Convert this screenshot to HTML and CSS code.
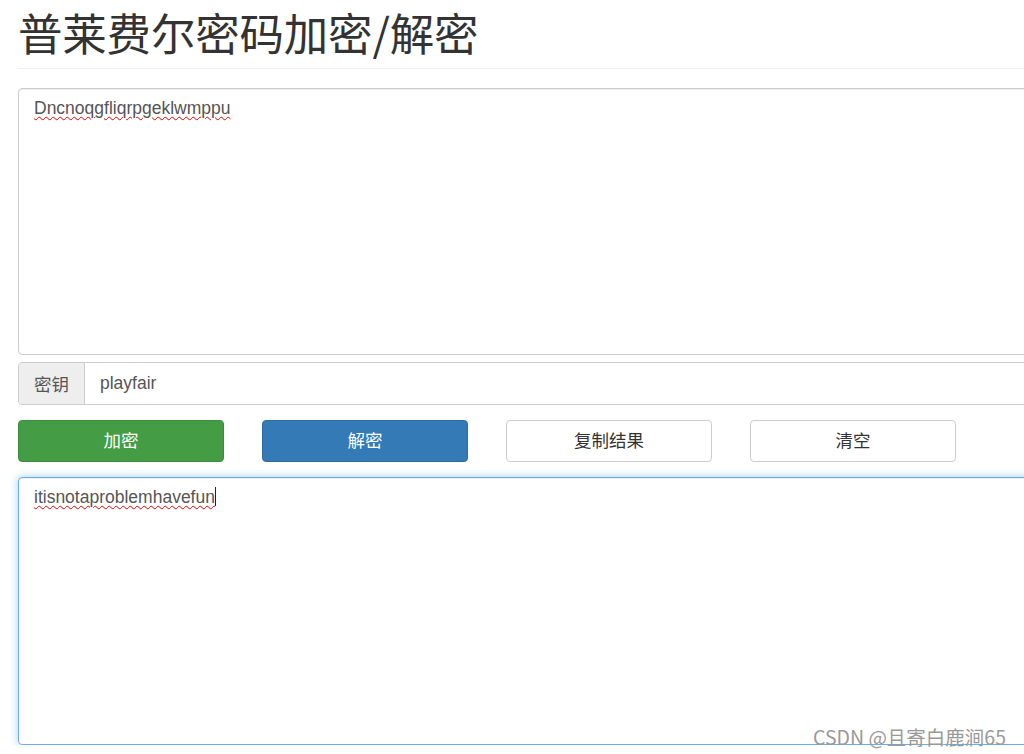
FILE: index.html
```html
<!DOCTYPE html>
<html lang="zh-CN">
<head>
<meta charset="utf-8">
<title>普莱费尔密码加密/解密</title>
<link rel="stylesheet" href="styles.css">
</head>
<body>
<div class="page">
  <h1 class="title">普莱费尔密码加密/解密</h1>
  <div class="box box-input"><span class="spell">Dncnoqgfliqrpgeklwmppu</span></div>
  <div class="input-group">
    <span class="addon">密钥</span>
    <span class="key">playfair</span>
  </div>
  <div class="buttons">
    <button class="btn btn-green">加密</button>
    <button class="btn btn-blue">解密</button>
    <button class="btn btn-plain">复制结果</button>
    <button class="btn btn-plain">清空</button>
  </div>
  <div class="box box-output focus"><span class="spell">itisnotaproblemhavefun</span><span class="caret"></span></div>
</div>
<div class="watermark">CSDN @且寄白鹿涧65</div>
</body>
</html>
```
FILE: styles.css
```css
html, body {
  margin: 0;
  padding: 0;
  overflow: hidden;
  background: #fff;
  font-family: "Liberation Sans", Arial, "Noto Sans CJK SC", sans-serif;
  color: #555;
}
.page {
  width: 1100px;
  padding-left: 18px;
}
.title {
  margin: 0;
  padding-top: 6px;
  height: 69px;
  box-sizing: border-box;
  font-family: "Noto Sans CJK SC", sans-serif;
  font-weight: 400;
  font-size: 44.5px;
  line-height: 52px;
  color: #333;
  border-bottom: 1px solid #eee;
  letter-spacing: -0.2px;
}
.box {
  box-sizing: border-box;
  border: 1px solid #ccc;
  border-radius: 4px;
  padding: 8px 15px;
  font-size: 17.5px;
  line-height: 22px;
  color: #555;
  box-shadow: inset 0 1px 1px rgba(0,0,0,.075);
}
.box-input {
  margin-top: 19px;
  height: 267px;
}
.spell {
  text-decoration: underline wavy #e00;
  text-decoration-thickness: 1px;
  text-underline-offset: 2px;
}
.caret {
  display: inline-block;
  width: 1px;
  height: 19px;
  background: #222;
  vertical-align: -3px;
}
.input-group {
  display: flex;
  margin-top: 7px;
  height: 43px;
  box-sizing: border-box;
  border: 1px solid #ccc;
  border-radius: 4px;
  overflow: hidden;
}
.addon {
  width: 65px;
  background: #eee;
  border-right: 1px solid #ccc;
  display: flex;
  align-items: center;
  justify-content: center;
  padding-bottom: 1px;
  color: #555;
  font-family: "Noto Sans CJK SC", sans-serif;
  font-size: 17.5px;
}
.key {
  display: flex;
  align-items: center;
  padding-left: 15px;
  color: #555;
  font-size: 17.5px;
}
.buttons {
  display: flex;
  gap: 38px;
  margin-top: 15px;
}
.btn {
  width: 206px;
  height: 42px;
  border-radius: 4px;
  border: 1px solid #ccc;
  background: #fff;
  color: #333;
  font-family: "Noto Sans CJK SC", sans-serif;
  font-size: 17.5px;
  padding: 0 0 3px 0;
}
.btn-green {
  background: #449d44;
  border-color: #3d8b3d;
  color: #fff;
}
.btn-blue {
  background: #337ab7;
  border-color: #2e6da4;
  color: #fff;
}
.box-output {
  margin-top: 15px;
  height: 268px;
}
.focus {
  border-color: #66afe9;
  box-shadow: inset 0 1px 1px rgba(0,0,0,.075), 0 0 8px rgba(102,175,233,.6);
}
.watermark {
  position: absolute;
  left: 813px;
  top: 722px;
  font-family: "Noto Sans CJK SC", sans-serif;
  font-size: 19.5px;
  color: #999;
}
```
